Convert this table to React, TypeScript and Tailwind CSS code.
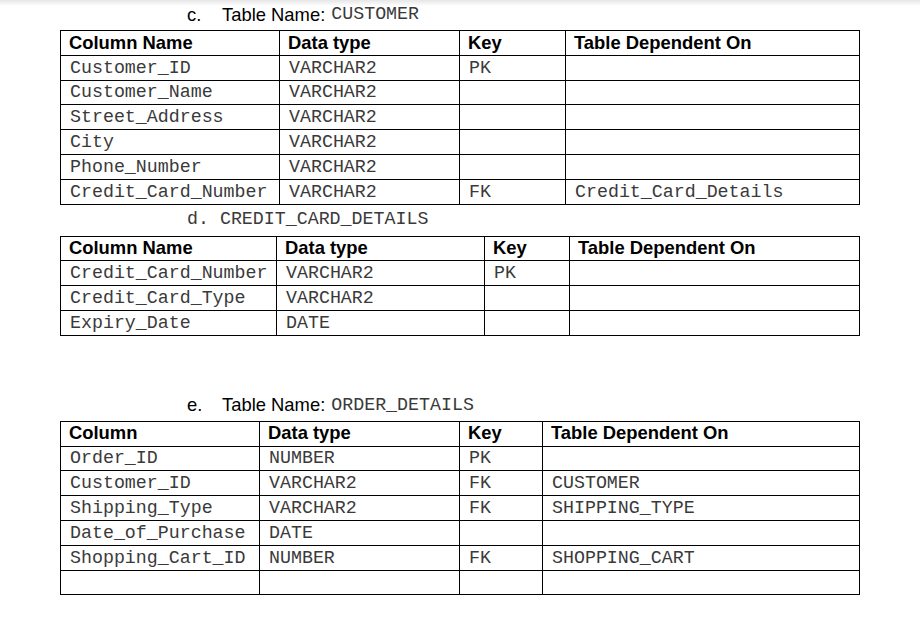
const sans = "font-['Liberation_Sans',Arial,sans-serif]";
const mono = "font-['Liberation_Mono','Courier_New',monospace]";

type Row = [string, string, string, string];

const customer: Row[] = [
  ["Customer_ID", "VARCHAR2", "PK", ""],
  ["Customer_Name", "VARCHAR2", "", ""],
  ["Street_Address", "VARCHAR2", "", ""],
  ["City", "VARCHAR2", "", ""],
  ["Phone_Number", "VARCHAR2", "", ""],
  ["Credit_Card_Number", "VARCHAR2", "FK", "Credit_Card_Details"],
];

const creditCard: Row[] = [
  ["Credit_Card_Number", "VARCHAR2", "PK", ""],
  ["Credit_Card_Type", "VARCHAR2", "", ""],
  ["Expiry_Date", "DATE", "", ""],
];

const orderDetails: Row[] = [
  ["Order_ID", "NUMBER", "PK", ""],
  ["Customer_ID", "VARCHAR2", "FK", "CUSTOMER"],
  ["Shipping_Type", "VARCHAR2", "FK", "SHIPPING_TYPE"],
  ["Date_of_Purchase", "DATE", "", ""],
  ["Shopping_Cart_ID", "NUMBER", "FK", "SHOPPING_CART"],
  ["", "", "", ""],
];

function SchemaTable({ first, widths, rows }: { first: string; widths: number[]; rows: Row[] }) {
  const heads = [first, "Data type", "Key", "Table Dependent On"];
  return (
    <table className="ml-[60px] table-fixed border-collapse">
      <colgroup>
        {widths.map((w, i) => (
          <col key={i} style={{ width: w }} />
        ))}
      </colgroup>
      <thead>
        <tr>
          {heads.map((h) => (
            <th key={h} className={`h-[24.8px] border border-black p-0 pl-[8px] text-left align-middle text-[18.4px] leading-none font-bold text-black ${sans}`}>
              {h}
            </th>
          ))}
        </tr>
      </thead>
      <tbody>
        {rows.map((r, i) => (
          <tr key={i}>
            {r.map((c, j) => (
              <td key={j} className={`h-[24.8px] border border-black p-0 pl-[9px] align-middle text-[18.3px] leading-none whitespace-nowrap text-[#3a3a3a] ${mono}`}>
                {c}
              </td>
            ))}
          </tr>
        ))}
      </tbody>
    </table>
  );
}

export default function App() {
  return (
    <div className="h-[620px] w-[920px] overflow-hidden bg-[linear-gradient(to_bottom,#e6e6e6,#ffffff_6px)] text-black">
      <div className={`flex h-[30px] items-center pl-[187px] text-[18.4px] ${sans}`}>
        <span className="w-[35px]">c.</span>
        <span>Table Name: </span>
        <span className={`ml-[6px] text-[18.3px] text-[#3a3a3a] ${mono}`}>CUSTOMER</span>
      </div>
      <SchemaTable first="Column Name" widths={[219, 180, 106, 294]} rows={customer} />

      <div className={`flex h-[31px] items-center pl-[187px] text-[18.3px] text-[#3a3a3a] ${mono}`}>
        d. CREDIT_CARD_DETAILS
      </div>
      <SchemaTable first="Column Name" widths={[216, 208, 85, 290]} rows={creditCard} />

      <div className={`mt-[54px] flex h-[31px] items-center pl-[187px] text-[18.4px] ${sans}`}>
        <span className="w-[35px]">e.</span>
        <span>Table Name: </span>
        <span className={`ml-[6px] text-[18.3px] text-[#3a3a3a] ${mono}`}>ORDER_DETAILS</span>
      </div>
      <SchemaTable first="Column" widths={[199, 200, 83, 317]} rows={orderDetails} />
    </div>
  );
}
